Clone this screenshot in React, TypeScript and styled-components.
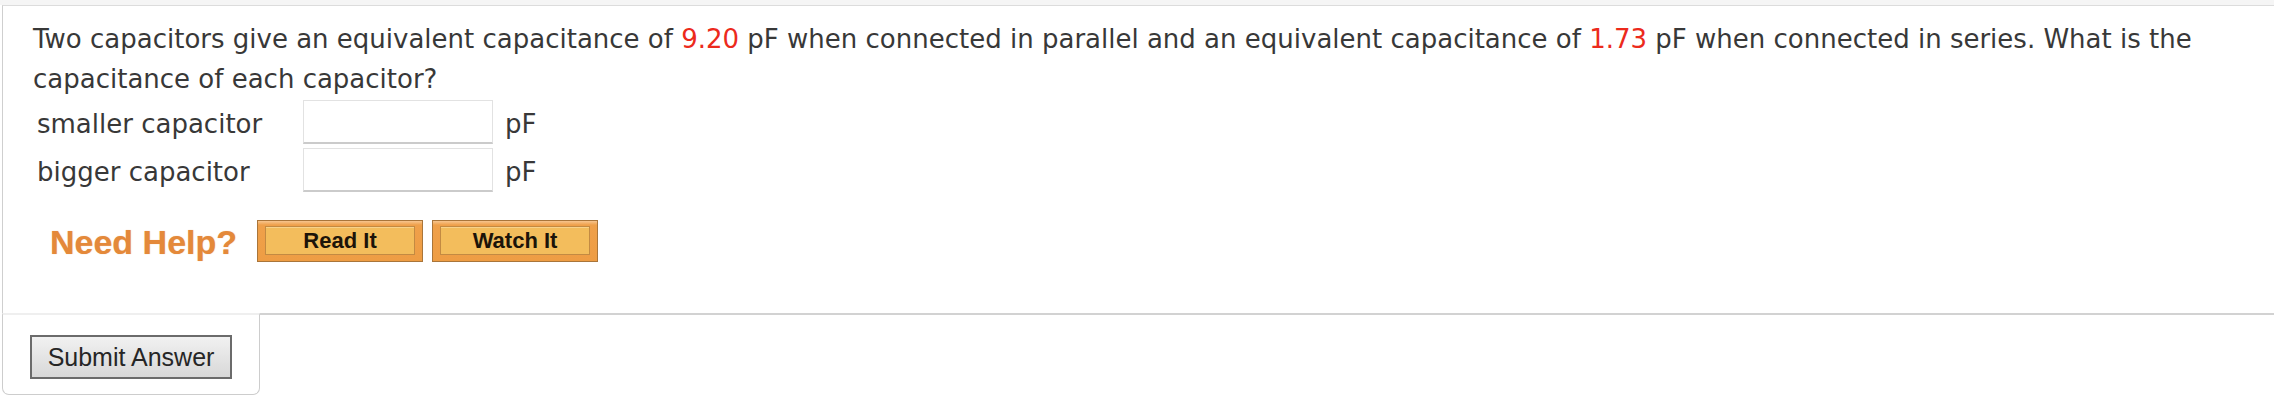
import React from "react";
import styled, { createGlobalStyle } from "styled-components";

const Global = createGlobalStyle`
  html, body { margin: 0; padding: 0; background: #ffffff; }
  body { font-family: "DejaVu Sans", Verdana, sans-serif; }
`;

const Page = styled.div`
  width: 2274px;
  display: flex;
  flex-direction: column;
`;

const TopStrip = styled.div`
  height: 5px;
  background: #f5f5f5;
`;

const Shell = styled.div`
  margin-left: 2px;
  display: flex;
  flex-direction: column;
`;

const Panel = styled.div`
  border-top: 1px solid #dcdcdc;
  border-left: 1px solid #cfcfcf;
  padding: 13px 0 51px 30px;
  color: #383838;
  font-family: "DejaVu Sans", Verdana, sans-serif;
  font-size: 26px;
  line-height: 40px;
`;

const Question = styled.p`
  margin: 0;
  width: 2180px;
`;

const Value = styled.span`
  color: #ec2a1c;
`;

const AnswerGrid = styled.div`
  display: grid;
  grid-template-columns: 270px 190px auto;
  row-gap: 4px;
  align-items: center;
  margin-top: 1px;
`;

const Label = styled.span`
  padding-left: 4px;
  padding-top: 4px;
  white-space: nowrap;
`;

const Unit = styled.span`
  padding-top: 4px;
  padding-left: 12px;
`;

const AnswerInput = styled.input`
  box-sizing: border-box;
  width: 190px;
  height: 44px;
  margin: 0;
  border: 1px solid #e2e2e2;
  border-bottom: 2px solid #cbcbcb;
  background: #ffffff;
  font: inherit;
  padding: 0 8px;
  outline: none;
`;

const HelpRow = styled.div`
  display: flex;
  align-items: center;
  margin-top: 28px;
  padding-left: 17px;
`;

const HelpTitle = styled.span`
  font-family: "Liberation Sans", Arial, sans-serif;
  font-weight: 700;
  font-size: 34px;
  line-height: 40px;
  color: #e4893a;
  margin-right: 20px;
  padding-top: 2px;
  text-shadow: 0 0 1px rgba(228, 137, 58, 0.6);
`;

const HelpButton = styled.button`
  box-sizing: border-box;
  width: 166px;
  height: 42px;
  margin: 0 9px 0 0;
  padding: 5px 7px 6px;
  border: 1px solid #a9753a;
  background: linear-gradient(#f7c58e 0px, #efa04a 4px, #ee9d44 100%);
  cursor: pointer;
  display: flex;
`;

const HelpFace = styled.span`
  flex: 1;
  display: flex;
  align-items: center;
  justify-content: center;
  border: 1px solid #c38a42;
  background: #f3bd5c;
  box-shadow: inset 0 1px 0 #f8d28a;
  font-family: "Liberation Sans", Arial, sans-serif;
  font-weight: 700;
  font-size: 22px;
  color: #1c1409;
`;

const Footer = styled.div`
  display: flex;
  align-items: flex-start;
`;

const SubmitTab = styled.div`
  box-sizing: border-box;
  width: 258px;
  padding: 20px 0 15px 27px;
  border: 1px solid #cdcdcd;
  border-top: 2px solid #efefef;
  border-radius: 0 0 7px 7px;
`;

const Filler = styled.div`
  flex: 1;
  border-top: 2px solid #d2d2d2;
`;

const SubmitButton = styled.button`
  box-sizing: border-box;
  width: 202px;
  height: 44px;
  margin: 0;
  padding: 0;
  border: 2px solid #6b6b6b;
  background: linear-gradient(#f1f1f1, #d8d8d8);
  font-family: "Liberation Sans", Arial, sans-serif;
  font-size: 25px;
  color: #262626;
  cursor: pointer;
`;

const answers = [
  { id: "small", label: "smaller capacitor" },
  { id: "big", label: "bigger capacitor" },
];

export default function App() {
  return (
    <Page>
      <Global />
      <TopStrip />
      <Shell>
        <Panel>
          <Question>
            Two capacitors give an equivalent capacitance of <Value>9.20</Value> pF when
            connected in parallel and an equivalent capacitance of <Value>1.73</Value> pF
            when connected in series. What is the capacitance of each capacitor?
          </Question>
          <AnswerGrid>
            {answers.map((a) => (
              <React.Fragment key={a.id}>
                <Label>{a.label}</Label>
                <AnswerInput type="text" aria-label={a.label} />
                <Unit>pF</Unit>
              </React.Fragment>
            ))}
          </AnswerGrid>
          <HelpRow>
            <HelpTitle>Need Help?</HelpTitle>
            <HelpButton type="button">
              <HelpFace>Read It</HelpFace>
            </HelpButton>
            <HelpButton type="button">
              <HelpFace>Watch It</HelpFace>
            </HelpButton>
          </HelpRow>
        </Panel>
        <Footer>
          <SubmitTab>
            <SubmitButton type="button">Submit Answer</SubmitButton>
          </SubmitTab>
          <Filler />
        </Footer>
      </Shell>
    </Page>
  );
}
